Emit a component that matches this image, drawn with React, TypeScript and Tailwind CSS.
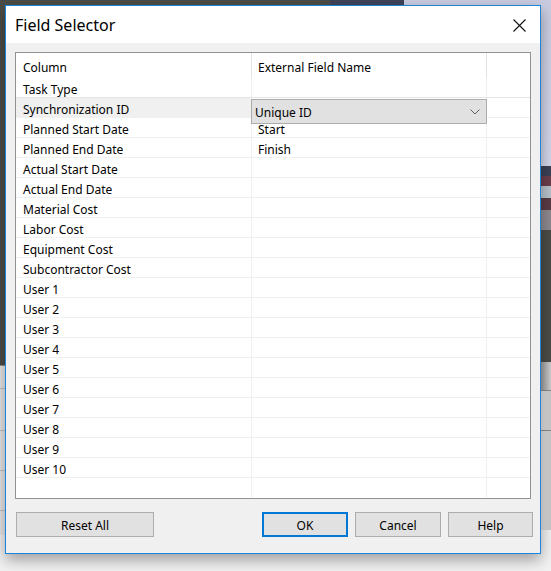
import React from "react";

const rows: { name: string; ext?: string }[] = [
  { name: "Task Type" },
  { name: "Synchronization ID", ext: "__dropdown__" },
  { name: "Planned Start Date", ext: "Start" },
  { name: "Planned End Date", ext: "Finish" },
  { name: "Actual Start Date" },
  { name: "Actual End Date" },
  { name: "Material Cost" },
  { name: "Labor Cost" },
  { name: "Equipment Cost" },
  { name: "Subcontractor Cost" },
  { name: "User 1" },
  { name: "User 2" },
  { name: "User 3" },
  { name: "User 4" },
  { name: "User 5" },
  { name: "User 6" },
  { name: "User 7" },
  { name: "User 8" },
  { name: "User 9" },
  { name: "User 10" },
];

function Button({ label, primary, className }: { label: string; primary?: boolean; className: string }) {
  return (
    <div
      className={
        "flex h-[25px] items-center justify-center bg-[#e1e1e1] pt-[2px] text-[12px] text-black " +
        (primary ? "border-2 border-[#0078d7] " : "border border-[#adadad] ") +
        className
      }
    >
      {label}
    </div>
  );
}

export default function App() {
  return (
    <div
      className="relative h-[571px] w-[551px] overflow-hidden bg-[#f2f2f2]"
      style={{ fontFamily: '"Noto Sans", "Open Sans", sans-serif' }}
    >
      {/* desktop background */}
      <div className="absolute left-0 top-0 h-[365px] w-[551px] bg-[#4b4c48]" />
      <div className="absolute left-[330px] top-0 h-[6px] w-[74px] bg-[#3f4359]" />
      <div className="absolute left-[404px] top-0 h-[166px] w-[147px] bg-gradient-to-b from-[#c9cce0] to-[#d3d6ea]" />
      <div className="absolute left-[541px] top-[166px] h-[10px] w-[10px] bg-[#3c4156]" />
      <div className="absolute left-[541px] top-[176px] h-[10px] w-[10px] bg-[#6b3f4c]" />
      <div className="absolute left-[541px] top-[186px] h-[12px] w-[10px] bg-[#b9c3cc]" />
      <div className="absolute left-[541px] top-[198px] h-[12px] w-[10px] bg-[#5b3c46]" />
      <div className="absolute left-[541px] top-[210px] h-[20px] w-[10px] bg-[#8e8a90]" />
      <div className="absolute left-[541px] top-[362px] h-[28px] w-[10px] bg-gradient-to-r from-[#9c9c9c] to-[#cfcfcf]" />
      <div className="absolute left-[541px] top-[390px] h-[140px] w-[10px] border-t border-[#8a8a8a] bg-gradient-to-r from-[#e4e4e4] to-[#c8c8c8]" />
      <div className="absolute left-[541px] top-[430px] h-px w-[10px] bg-[#8a8a8a]" />
      <div className="absolute left-0 top-[365px] h-[170px] w-[5px] border-t border-[#8c8c8c] bg-[#e6e6e6]" />
      <div className="absolute left-0 top-[388px] h-px w-[5px] bg-[#c0c0c0]" />
      <div className="absolute left-0 top-[430px] h-px w-[5px] bg-[#c0c0c0]" />
      <div className="absolute left-0 top-[470px] h-px w-[5px] bg-[#c0c0c0]" />
      <div className="absolute left-0 top-[510px] h-px w-[5px] bg-[#c0c0c0]" />

      {/* dialog window */}
      <div className="absolute left-[5px] top-[5px] flex h-[549px] w-[536px] flex-col border border-[#1c84d8] bg-[#f0f0f0] shadow-[0_6px_14px_rgba(0,0,0,0.35)]">
        {/* title bar */}
        <div className="flex h-[37px] shrink-0 items-center justify-between bg-white pl-[9px] pr-[14px]">
          <span className="pt-[1px] text-[16px] text-black">Field Selector</span>
          <svg width="13" height="13" viewBox="0 0 13 13" className="mt-[1px]">
            <path d="M0.5 0.5 L12.5 12.5 M12.5 0.5 L0.5 12.5" stroke="#111" strokeWidth="1.1" fill="none" />
          </svg>
        </div>

        {/* grid */}
        <div className="ml-[9px] mt-[9px] flex h-[447px] w-[516px] flex-col border border-[#8f9296] bg-white text-[12px] text-black">
          {/* header */}
          <div className="flex h-[25px] shrink-0">
            <div className="flex w-[236px] items-center border-r border-[#e3e3e3] pl-[7px] pt-[4px]">Column</div>
            <div className="flex w-[235px] items-center border-r border-[#e3e3e3] pl-[6px] pt-[4px]">External Field Name</div>
            <div className="flex-1" />
          </div>
          {rows.map((r, i) => (
            <div
              key={r.name}
              className={"relative flex h-[20px] shrink-0 border-b border-[#f0f0f0] " + (i === 0 ? "border-b-[#e4e4e4]" : "")}
            >
              <div
                className={
                  "flex w-[236px] items-center border-r border-[#f0f0f0] pl-[7px] pt-[4px] " +
                  (r.ext === "__dropdown__" ? "bg-[#f0f0f0]" : "")
                }
              >
                {r.name}
              </div>
              <div className="relative flex w-[235px] items-center border-r border-[#f0f0f0] pl-[6px] pt-[4px]">
                {r.ext && r.ext !== "__dropdown__" ? r.ext : null}
                {r.ext === "__dropdown__" ? (
                  <div className="absolute left-[-1px] top-[1px] z-10 flex h-[25px] w-[236px] items-center justify-between border border-[#acacac] bg-[#e1e1e1] pl-[3px] pr-[6px]">
                    <span className="pt-[2px]">Unique ID</span>
                    <svg width="10" height="6" viewBox="0 0 10 6">
                      <path d="M0.5 0.5 L5 5 L9.5 0.5" stroke="#606060" strokeWidth="1" fill="none" />
                    </svg>
                  </div>
                ) : null}
              </div>
              <div className="flex-1" />
            </div>
          ))}
          <div className="flex flex-1">
            <div className="w-[236px] border-r border-[#f0f0f0]" />
            <div className="w-[235px] border-r border-[#f0f0f0]" />
            <div className="flex-1" />
          </div>
        </div>

        {/* buttons */}
        <div className="mt-[13px] flex pl-[10px] pr-[7px]">
          <Button label="Reset All" className="w-[138px]" />
          <div className="flex-1" />
          <Button label="OK" primary className="w-[86px]" />
          <Button label="Cancel" className="ml-[7px] w-[86px]" />
          <Button label="Help" className="ml-[7px] w-[85px]" />
        </div>
      </div>
    </div>
  );
}
